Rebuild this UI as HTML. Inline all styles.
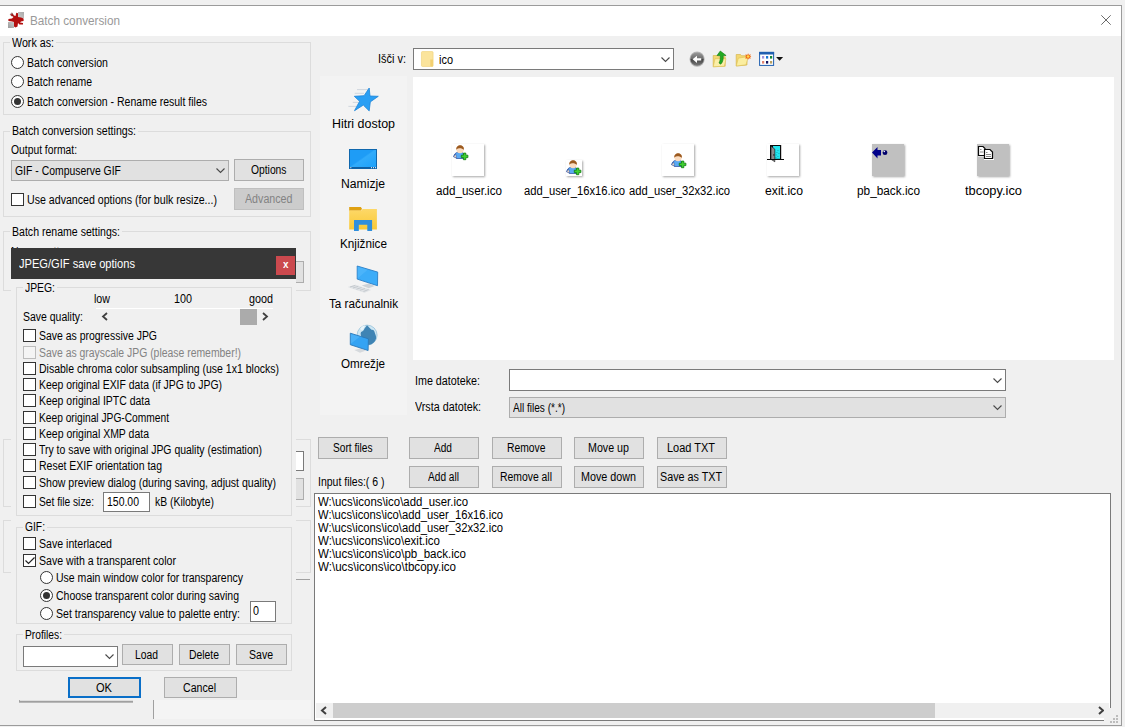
<!DOCTYPE html>
<html lang="sl">
<head>
<meta charset="utf-8">
<title>Batch conversion</title>
<style>
html,body{margin:0;padding:0;}
body{width:1125px;height:727px;overflow:hidden;background:#f0f0f0;font-family:"Liberation Sans","DejaVu Sans",sans-serif;}
#win{position:absolute;left:0;top:0;width:1125px;height:727px;overflow:hidden;background:#f0f0f0;}
#win div,#win i,#win button{position:absolute;box-sizing:border-box;display:block;margin:0;padding:0;}
#win button{font:inherit;color:inherit;text-align:left;overflow:visible;}
#win svg{position:absolute;overflow:visible;}
.t{position:absolute;white-space:pre;transform-origin:0 50%;display:block;}
.grp{border:1px solid #dcdcdc;}
.btn{background:#e1e1e1;border:1px solid #adadad;}
.btn.dis{background:#cccccc;border-color:#bfbfbf;}
.btn.def{border:2px solid #0a6fc8;}
.cb{background:#fff;border:1px solid #333;width:13px;height:13px;}
.cb.dis{border-color:#bcbcbc;background:#f4f4f4;}
.rb{background:#fff;border:1px solid #333;border-radius:50%;width:13px;height:13px;}
.rb.on::after{content:"";position:absolute;left:2px;top:2px;width:7px;height:7px;border-radius:50%;background:#333;}
.edit{background:#fff;border:1px solid #7a7a7a;}
.combo{background:#fff;border:1px solid #7a7a7a;}
.combo.lst{background:#e1e1e1;border-color:#adadad;}
.lbl{background:#f0f0f0;}
.thumb{background:#fff;box-shadow:1px 1px 2px rgba(0,0,0,.35);}
.thumb.g{background:#c0c0c0;}
.b{font-weight:bold;}
</style>
</head>
<body>
<div id="win">
<div style="left:0px;top:5px;width:1122px;height:721px;border:1px solid #9b9b9b;border-left:none;background:#f0f0f0;"></div>
<div style="left:0px;top:6px;width:1121px;height:30px;background:#fff;"></div>
<svg style="left:8px;top:12px" width="16" height="16" viewBox="0 0 16 16"><defs><linearGradient id="ig" x1="0" y1="1" x2="1" y2="0"><stop offset="0" stop-color="#9a9a9a"/><stop offset=".5" stop-color="#d8d8d8"/><stop offset="1" stop-color="#a8a8a8"/></linearGradient></defs><path d="M10 0h6v6h-6zM0 10h6v6H0z" fill="url(#ig)"/><path d="M8.300.8l1.700.5V5l3 .5 2.600 1v2.400L13 9.500l-1 1 3 .5v1.500h-3.500L10 11l-.5 3.500-2 1-1.500-1V10l-2-.5L.4 9V7L4 6.500 5.500 5 2.500 3 4 1.500 6 3.500 7.500 4z" fill="#b20e0e"/><path d="M2.300 2.600l1.500-1.800 1.300 1.700-1.400 1.300z" fill="none" stroke="#5a1414" stroke-width=".6"/></svg>
<span class="t" style="left:29.5px;top:14px;font-size:12px;line-height:15px;color:#999;transform:scaleX(0.9776);">Batch conversion</span>
<svg style="left:1101px;top:15px" width="10" height="10" viewBox="0 0 10 10"><path d="M0.300 0.300l9.400 9.400M9.700 0.300l-9.400 9.400" stroke="#6a6a6a" stroke-width="1" fill="none"/></svg>
<div class="grp" style="left:3px;top:42px;width:308px;height:73px;"></div>
<div class="lbl" style="left:10px;top:36px;width:46px;height:13px;"></div>
<span class="t" style="left:12.0px;top:36px;font-size:12px;line-height:15px;transform:scaleX(0.8912);">Work as:</span>
<label>
<i class="rb" style="left:11px;top:56px;width:13px;height:13px;"></i>
<span class="t" style="left:27.0px;top:56px;font-size:12px;line-height:15px;transform:scaleX(0.8798);">Batch conversion</span>
</label>
<label>
<i class="rb" style="left:11px;top:75px;width:13px;height:13px;"></i>
<span class="t" style="left:27.0px;top:75px;font-size:12px;line-height:15px;transform:scaleX(0.8699);">Batch rename</span>
</label>
<label>
<i class="rb on" style="left:11px;top:95px;width:13px;height:13px;"></i>
<span class="t" style="left:27.0px;top:95px;font-size:12px;line-height:15px;transform:scaleX(0.8762);">Batch conversion - Rename result files</span>
</label>
<div class="grp" style="left:3px;top:131px;width:308px;height:86px;"></div>
<div class="lbl" style="left:10px;top:125px;width:128px;height:13px;"></div>
<span class="t" style="left:12.0px;top:124px;font-size:12px;line-height:15px;transform:scaleX(0.8852);">Batch conversion settings:</span>
<span class="t" style="left:11.0px;top:143px;font-size:12px;line-height:15px;transform:scaleX(0.8605);">Output format:</span>
<div class="combo lst" style="left:11px;top:160px;width:218px;height:21px;"></div>
<span class="t" style="left:14.5px;top:164px;font-size:12px;line-height:15px;transform:scaleX(0.8686);">GIF - Compuserve GIF</span>
<svg style="left:215px;top:168px;margin-left:1px" width="9" height="6" viewBox="0 0 9 6"><path d="M0.5 0.5l4 4 4-4" stroke="#4a4a4a" stroke-width="1.1" fill="none"/></svg>
<button class="btn" style="left:234px;top:159px;width:70px;height:22px;"><span class="t" style="left:15.6px;top:3px;font-size:12px;line-height:15px;transform:scaleX(0.8583);">Options</span></button>
<label>
<i class="cb" style="left:11px;top:193px;width:13px;height:13px;"></i>
<span class="t" style="left:27.0px;top:193px;font-size:12px;line-height:15px;transform:scaleX(0.8846);">Use advanced options (for bulk resize...)</span>
</label>
<button class="btn dis" style="left:234px;top:188px;width:70px;height:22px;"><span class="t" style="left:9.6px;top:3px;font-size:12px;line-height:15px;color:#838383;transform:scaleX(0.8899);">Advanced</span></button>
<div class="grp" style="left:3px;top:231px;width:308px;height:60px;"></div>
<div class="lbl" style="left:10px;top:225px;width:112px;height:13px;"></div>
<span class="t" style="left:12.0px;top:225px;font-size:12px;line-height:15px;transform:scaleX(0.8799);">Batch rename settings:</span>
<div style="left:11px;top:238px;width:90px;height:10px;overflow:hidden"><span class="t" style="left:0;top:6.5px;font-size:12px;line-height:15px;transform:scaleX(.875)">Name pattern:</span></div>
<div class="btn" style="left:290px;top:261px;width:14px;height:22px;"></div>
<div class="grp" style="left:3px;top:439px;width:308px;height:68px;"></div>
<div class="grp" style="left:3px;top:520px;width:308px;height:53px;"></div>
<div class="edit" style="left:290px;top:451px;width:14px;height:20px;"></div>
<div class="btn" style="left:290px;top:478px;width:14px;height:22px;"></div>
<div style="left:296px;top:579px;width:14px;height:1px;background:#a0a0a0;"></div>
<div style="left:19px;top:700px;width:114px;height:1px;background:#dedede;"></div>
<div style="left:19px;top:699px;width:1px;height:3px;background:#a8a8a8;"></div>
<div style="left:19px;top:701px;width:114px;height:1px;background:#a0a0a0;"></div>
<div style="left:19px;top:702px;width:114px;height:1px;background:#b8b8b8;"></div>
<div style="left:153px;top:700px;width:1px;height:19px;background:#a0a0a0;"></div>
<div style="left:154px;top:700px;width:157px;height:19px;background:#f4f4f4;"></div>
<div style="left:11px;top:248px;width:285px;height:452px;background:#f0f0f0;"></div>
<div style="left:11px;top:248px;width:285px;height:31px;background:#373737;"></div>
<span class="t" style="left:19.0px;top:256px;font-size:13px;line-height:16px;color:#fff;transform:scaleX(0.8539);">JPEG/GIF save options</span>
<div style="left:276px;top:256px;width:19px;height:19px;background:#cb494e;"></div>
<span class="t b" style="left:282.5px;top:258px;font-size:10px;line-height:13px;color:#fff;transform:scaleX(0.9888);">x</span>
<div class="grp" style="left:16px;top:287px;width:276px;height:229px;"></div>
<div class="lbl" style="left:23px;top:281px;width:34px;height:13px;"></div>
<span class="t" style="left:25.0px;top:281px;font-size:12px;line-height:15px;transform:scaleX(0.8649);">JPEG:</span>
<span class="t" style="left:94.0px;top:292px;font-size:12px;line-height:15px;transform:scaleX(0.8881);">low</span>
<span class="t" style="left:174.0px;top:292px;font-size:12px;line-height:15px;transform:scaleX(0.8986);">100</span>
<span class="t" style="left:249.0px;top:292px;font-size:12px;line-height:15px;transform:scaleX(0.8988);">good</span>
<span class="t" style="left:23.0px;top:310px;font-size:12px;line-height:15px;transform:scaleX(0.8731);">Save quality:</span>
<div style="left:96px;top:308px;width:177px;height:1px;background:#fff;"></div>
<div style="left:240px;top:309px;width:17px;height:16px;background:#ababab;"></div>
<svg style="left:101px;top:312px" width="8" height="9" viewBox="0 0 8 9"><path d="M6 1L2 4.500 6 8" stroke="#404040" stroke-width="1.800" fill="none"/></svg>
<svg style="left:261px;top:312px" width="8" height="9" viewBox="0 0 8 9"><path d="M2 1l4 3.500L2 8" stroke="#404040" stroke-width="1.800" fill="none"/></svg>
<label>
<i class="cb" style="left:23px;top:329px;width:13px;height:13px;"></i>
<span class="t" style="left:39.0px;top:329px;font-size:12px;line-height:15px;transform:scaleX(0.8715);">Save as progressive JPG</span>
</label>
<label>
<i class="cb dis" style="left:23px;top:346px;width:13px;height:13px;"></i>
<span class="t" style="left:39.0px;top:346px;font-size:12px;line-height:15px;color:#838383;transform:scaleX(0.8678);">Save as grayscale JPG (please remember!)</span>
</label>
<label>
<i class="cb" style="left:23px;top:362px;width:13px;height:13px;"></i>
<span class="t" style="left:39.0px;top:362px;font-size:12px;line-height:15px;transform:scaleX(0.8755);">Disable chroma color subsampling (use 1x1 blocks)</span>
</label>
<label>
<i class="cb" style="left:23px;top:378px;width:13px;height:13px;"></i>
<span class="t" style="left:39.0px;top:378px;font-size:12px;line-height:15px;transform:scaleX(0.8683);">Keep original EXIF data (if JPG to JPG)</span>
</label>
<label>
<i class="cb" style="left:23px;top:394px;width:13px;height:13px;"></i>
<span class="t" style="left:39.0px;top:394px;font-size:12px;line-height:15px;transform:scaleX(0.8712);">Keep original IPTC data</span>
</label>
<label>
<i class="cb" style="left:23px;top:411px;width:13px;height:13px;"></i>
<span class="t" style="left:39.0px;top:411px;font-size:12px;line-height:15px;transform:scaleX(0.8512);">Keep original JPG-Comment</span>
</label>
<label>
<i class="cb" style="left:23px;top:427px;width:13px;height:13px;"></i>
<span class="t" style="left:39.0px;top:427px;font-size:12px;line-height:15px;transform:scaleX(0.8740);">Keep original XMP data</span>
</label>
<label>
<i class="cb" style="left:23px;top:443px;width:13px;height:13px;"></i>
<span class="t" style="left:39.0px;top:443px;font-size:12px;line-height:15px;transform:scaleX(0.8700);">Try to save with original JPG quality (estimation)</span>
</label>
<label>
<i class="cb" style="left:23px;top:459px;width:13px;height:13px;"></i>
<span class="t" style="left:39.0px;top:459px;font-size:12px;line-height:15px;transform:scaleX(0.8739);">Reset EXIF orientation tag</span>
</label>
<label>
<i class="cb" style="left:23px;top:476px;width:13px;height:13px;"></i>
<span class="t" style="left:39.0px;top:476px;font-size:12px;line-height:15px;transform:scaleX(0.8795);">Show preview dialog (during saving, adjust quality)</span>
</label>
<label>
<i class="cb" style="left:23px;top:495px;width:13px;height:13px;"></i>
<span class="t" style="left:39.0px;top:495px;font-size:12px;line-height:15px;transform:scaleX(0.8500);">Set file size:</span>
</label>
<div class="edit" style="left:103px;top:492px;width:47px;height:20px;"></div>
<span class="t" style="left:107.0px;top:495px;font-size:12px;line-height:15px;transform:scaleX(0.8719);">150.00</span>
<span class="t" style="left:154.5px;top:495px;font-size:12px;line-height:15px;transform:scaleX(0.8672);">kB (Kilobyte)</span>
<div class="grp" style="left:16px;top:527px;width:276px;height:97px;"></div>
<div class="lbl" style="left:23px;top:521px;width:24px;height:13px;"></div>
<span class="t" style="left:25.0px;top:520px;font-size:12px;line-height:15px;transform:scaleX(0.8568);">GIF:</span>
<label>
<i class="cb" style="left:23px;top:537px;width:13px;height:13px;"></i>
<span class="t" style="left:39.0px;top:537px;font-size:12px;line-height:15px;transform:scaleX(0.8825);">Save interlaced</span>
</label>
<label>
<i class="cb" style="left:23px;top:554px;width:13px;height:13px;"></i>
<svg style="left:25px;top:557px" width="10" height="8" viewBox="0 0 10 8"><path d="M0.5 3.5l3 3 6-6" stroke="#222" stroke-width="1.2" fill="none"/></svg>
<span class="t" style="left:39.0px;top:554px;font-size:12px;line-height:15px;transform:scaleX(0.8815);">Save with a transparent color</span>
</label>
<label>
<i class="rb" style="left:40px;top:571px;width:13px;height:13px;"></i>
<span class="t" style="left:56.0px;top:571px;font-size:12px;line-height:15px;transform:scaleX(0.8762);">Use main window color for transparency</span>
</label>
<label>
<i class="rb on" style="left:40px;top:589px;width:13px;height:13px;"></i>
<span class="t" style="left:56.0px;top:589px;font-size:12px;line-height:15px;transform:scaleX(0.8736);">Choose transparent color during saving</span>
</label>
<label>
<i class="rb" style="left:40px;top:607px;width:13px;height:13px;"></i>
<span class="t" style="left:56.0px;top:607px;font-size:12px;line-height:15px;transform:scaleX(0.8812);">Set transparency value to palette entry:</span>
</label>
<div class="edit" style="left:250px;top:601px;width:26px;height:21px;"></div>
<span class="t" style="left:253.0px;top:604px;font-size:12px;line-height:15px;transform:scaleX(0.8972);">0</span>
<div class="grp" style="left:16px;top:634px;width:276px;height:37px;"></div>
<div class="lbl" style="left:23px;top:628px;width:41px;height:13px;"></div>
<span class="t" style="left:25.0px;top:628px;font-size:12px;line-height:15px;transform:scaleX(0.8533);">Profiles:</span>
<div class="combo" style="left:23px;top:646px;width:95px;height:21px;"></div>
<svg style="left:104px;top:654px;margin-left:1px" width="9" height="6" viewBox="0 0 9 6"><path d="M0.5 0.5l4 4 4-4" stroke="#4a4a4a" stroke-width="1.1" fill="none"/></svg>
<button class="btn" style="left:122px;top:644px;width:51px;height:21px;"><span class="t" style="left:12.3px;top:3px;font-size:12px;line-height:15px;transform:scaleX(0.8613);">Load</span></button>
<button class="btn" style="left:179px;top:644px;width:51px;height:21px;"><span class="t" style="left:8.8px;top:3px;font-size:12px;line-height:15px;transform:scaleX(0.8649);">Delete</span></button>
<button class="btn" style="left:236px;top:644px;width:51px;height:21px;"><span class="t" style="left:11.8px;top:3px;font-size:12px;line-height:15px;transform:scaleX(0.8772);">Save</span></button>
<button class="btn def" style="left:68px;top:677px;width:73px;height:21px;"><span class="t" style="left:25.8px;top:2px;font-size:12px;line-height:15px;transform:scaleX(0.9225);">OK</span></button>
<button class="btn" style="left:164px;top:677px;width:73px;height:21px;"><span class="t" style="left:18.3px;top:3px;font-size:12px;line-height:15px;transform:scaleX(0.8833);">Cancel</span></button>
<span class="t" style="left:378.0px;top:52px;font-size:12px;line-height:15px;transform:scaleX(0.9129);">Išči v:</span>
<div class="combo" style="left:413px;top:48px;width:261px;height:22px;"></div>
<svg style="left:421px;top:51px" width="13" height="16" viewBox="0 0 14 17"><path d="M.5 1.500q0-1 1-1h10.500q1 0 1 1V15.500q0 1-1 1H1.500q-1 0-1-1z" fill="#fbe49c" stroke="#efd27a" stroke-width=".7"/>
<path d="M10 9h3v7.500h-2q-1 0-1-1z" fill="#f3d071"/></svg>
<span class="t" style="left:438.5px;top:53px;font-size:12px;line-height:15px;transform:scaleX(0.9124);">ico</span>
<svg style="left:660px;top:57px;margin-left:1px" width="9" height="6" viewBox="0 0 9 6"><path d="M0.5 0.5l4 4 4-4" stroke="#4a4a4a" stroke-width="1.1" fill="none"/></svg>
<svg style="left:684px;top:41px" width="60" height="37" viewBox="0 0 60 37"><defs><linearGradient id="bg1" x1="0" y1="0" x2="0" y2="1"><stop offset="0" stop-color="#9a9a9a"/><stop offset=".5" stop-color="#6a6a6a"/><stop offset=".52" stop-color="#454545"/><stop offset="1" stop-color="#7a7a7a"/></linearGradient></defs>
<circle cx="13.100" cy="18.100" r="7.600" fill="#b4b4b4"/><circle cx="13.100" cy="18.100" r="6.700" fill="url(#bg1)"/>
<path d="M8.600 18.300l4.400-3.600v2.500h4.200v2.200H13v2.500z" fill="#fff"/></svg>
<svg style="left:684px;top:41px" width="60" height="37" viewBox="0 0 60 37"><path d="M29.200 14.500h4.500l1 1.200h6.500v9.500l-12 .6z" fill="#f3d772" stroke="#d2b040" stroke-width=".6"/>
<path d="M29.300 25.700l1.700-8h11l-1.700 7.500z" fill="#fbeea8" stroke="#d9bb4c" stroke-width=".5"/>
<path d="M36.300 10l5.800 4.500h-2.900c.3 3.500-.3 6.500-2.400 8.700l-1.800-1.200c1.300-2.300 1.500-4.800 1.200-7.500H33z" fill="#22aa22" stroke="#0d7a0d" stroke-width=".6" stroke-linejoin="round"/></svg>
<svg style="left:730px;top:41px" width="60" height="37" viewBox="0 0 60 37"><path d="M6.200 13.500h4.300l1 1.200h5.500v9.300l-10.800 1z" fill="#f3d772" stroke="#d2b040" stroke-width=".6"/>
<path d="M6.300 25l2-7.800 10-1.700-2.300 8.300z" fill="#fbeea0" stroke="#d9bb4c" stroke-width=".5"/>
<g transform="translate(18.100 15.500)"><path d="M0-3.200L.8-1.400 2.700-2.300 2-.4 3.200 0 2 .9 2.700 2.300 .8 1.700 0 3.200-.8 1.700-2.700 2.300-2-.9-3.200 0-2-.4-2.700-2.300-.8-1.400z" fill="#ee6a14"/><circle r="1.300" fill="#ffd64a"/></g></svg>
<svg style="left:730px;top:41px" width="60" height="37" viewBox="0 0 60 37"><rect x="29.600" y="11.400" width="14" height="13" fill="#fff" stroke="#1f5fb0" stroke-width="1"/>
<rect x="29.100" y="10.900" width="15" height="2.600" fill="#1f5fb0"/>
<rect x="32" y="15" width="2.200" height="2.600" fill="#a394dc"/><rect x="36" y="15" width="2.200" height="2.600" fill="#1a78d2"/><rect x="40" y="15" width="2.200" height="2.600" fill="#12863a"/>
<rect x="32" y="20" width="2.200" height="2.600" fill="#e28472"/><rect x="36" y="20" width="2.200" height="2.600" fill="#12125e"/><rect x="40" y="20" width="2.200" height="2.600" fill="#b9a264"/>
<path d="M46.100 16h7l-3.500 3.800z" fill="#111"/></svg>
<div style="left:320px;top:76px;width:87px;height:339px;background:#f3f3f3;"></div>
<svg style="left:334px;top:80px" width="60" height="37" viewBox="0 0 60 37"><g stroke="#c3ccd6" stroke-width=".9" opacity=".8"><path d="M23 9.600H34M20.800 13.300H30M18.800 22.400H24.500M14.400 26.400H22.500"/></g>
<path d="M35.200 8L36 16 44.300 16.300 36.300 21.900 35.200 30.900 29.300 25.100 20.500 30.700 25.600 21.300 20.300 16.300 30.100 15.700z" fill="#2a9ff4" stroke="#1c84d8" stroke-width=".8" stroke-linejoin="round"/></svg>
<span class="t" style="left:331.5px;top:116px;font-size:12px;line-height:16px;transform:scaleX(1.0378);">Hitri dostop</span>
<svg style="left:334px;top:140px" width="60" height="37" viewBox="0 0 60 37"><defs><linearGradient id="dg" x1="0" y1="0" x2="1" y2="1"><stop offset="0" stop-color="#1e9cf6"/><stop offset=".45" stop-color="#1e9cf6"/><stop offset=".5" stop-color="#31abfb"/><stop offset="1" stop-color="#1aa0fa"/></linearGradient></defs>
<rect x="15.500" y="9.500" width="27" height="19" fill="url(#dg)" stroke="#0f67ad"/>
<rect x="16" y="27" width="26" height="1.500" fill="#0f5fa3"/>
<rect x="16.300" y="27.200" width="1" height="1" fill="#fff"/><rect x="37" y="27.200" width="1" height="1" fill="#fff"/><rect x="39" y="27.200" width="1" height="1" fill="#fff"/><rect x="41" y="27.200" width="1" height="1" fill="#fff"/></svg>
<span class="t" style="left:341.0px;top:176px;font-size:12px;line-height:16px;transform:scaleX(1.0151);">Namizje</span>
<svg style="left:334px;top:200px" width="60" height="37" viewBox="0 0 60 37"><path d="M15.200 7h11.600l1.200 1.700-1.200 2H15.200z" fill="#dfa011"/>
<defs><linearGradient id="lg" x1="0" y1="0" x2="0" y2="1"><stop offset="0" stop-color="#fdd868"/><stop offset="1" stop-color="#f9c936"/></linearGradient></defs>
<path d="M15.200 10.500h12l1.500-1.500h14.200v20.600H15.200z" fill="url(#lg)"/>
<path d="M20 20.300q0-.3.300-.3h17.500q.300 0 .300.300v10.600h-4.800v-6.100h-8.500v6.100H20z" fill="#2f8fdc"/></svg>
<span class="t" style="left:339.5px;top:236px;font-size:12px;line-height:16px;transform:scaleX(0.9785);">Knjižnice</span>
<svg style="left:334px;top:258px" width="60" height="37" viewBox="0 0 60 37"><path d="M27.700 27.500l7-2 6 2.500-6 2.200z" fill="#cdd2d7"/>
<path d="M13.600 29.100l7.700-2.400 16 5.300-6.900 2.700z" fill="#dfe2e5"/>
<path d="M16 29l5.300-1.600M19 30l5.300-1.700M22.500 31.200l5-1.700M26 32.300l5-1.800M29.500 33.500l5-2" stroke="#b9bec4" stroke-width=".7"/>
<path d="M23.200 8l20.500 6.100-.2 13.600-20.300-6.600z" fill="#3cacf8" stroke="#2b7fc6" stroke-width=".9" stroke-linejoin="round"/>
<path d="M23.700 8.700l10 3-10 8.500z" fill="#55b9fb" opacity=".6"/></svg>
<span class="t" style="left:328.5px;top:296px;font-size:12px;line-height:16px;transform:scaleX(0.9757);">Ta računalnik</span>
<svg style="left:334px;top:318px" width="60" height="37" viewBox="0 0 60 37"><circle cx="33.100" cy="17.100" r="10" fill="#cfe7f3" stroke="#7fb3d1" stroke-width=".6"/>
<path d="M33 7.300c2 1.500 3 3.500 4.500 4.500 1.500-.5 2.500.5 3 2 .5 2.500 2 4 1.500 7-.8 3-3.500 5.500-7 6.300-3-1-3.500-4-5.500-6-2.500-2-3.500-4.500-2.500-7 1.500-.5 3-1.500 3.500-3.500z" fill="#3f84b4"/>
<path d="M26 11c1-2 3-3.500 5-3.800-1 2-1 3.800-3 5z" fill="#e9f5fb"/>
<path d="M20.300 32l6-1.500 5.700 2-6 2.200z" fill="#d5d9dd"/>
<path d="M16.300 15.200l18.100 5.600-.3 11.700-17.800-5.800z" fill="#34a3f3" stroke="#2b78b8" stroke-width=".9" stroke-linejoin="round"/>
<path d="M16.800 15.900l9 2.800-9 7z" fill="#5bbcfb" opacity=".55"/></svg>
<span class="t" style="left:341.0px;top:356px;font-size:12px;line-height:16px;transform:scaleX(0.9704);">Omrežje</span>
<div style="left:413px;top:77px;width:701px;height:283px;background:#fff;"></div>
<div class="thumb" style="left:452px;top:144px;width:32px;height:32px;"></div>
<div class="thumb" style="left:662px;top:144px;width:32px;height:32px;"></div>
<div class="thumb" style="left:767px;top:144px;width:32px;height:32px;"></div>
<div class="thumb g" style="left:872px;top:144px;width:32px;height:32px;"></div>
<div class="thumb g" style="left:977px;top:144px;width:32px;height:32px;"></div>
<svg style="left:453px;top:145px" width="16" height="16" viewBox="0 0 16 16"><path d="M.6 11.800C1 9.500 2.500 7.600 4.800 7.300h4.200c1 .4 1.700 1.500 1.700 3.200v3H3.300c-.8-1.600-1.800-1.400-2.700-1.700z" fill="#5aa9f2" stroke="#2a4a9c" stroke-width=".7"/>
<path d="M.8 11.500l1.800-2.500 1 3.800c-1 0-2.200-.4-2.800-1.300z" fill="#fbe0c6" stroke="#2a4a9c" stroke-width=".5"/>
<ellipse cx="7.100" cy="4.300" rx="3.700" ry="3.900" fill="#fbdcc0"/>
<path d="M3.300 4.800C3 1.800 5 .2 7.100.2s4.200 1.600 3.800 4.600C9.500 3.400 7.500 3 6 3.300 4.800 3.500 3.800 4 3.300 4.800z" fill="#9c5a1f"/>
<path d="M10.400 8.100h2.400v2.100h2.100v2.400h-2.100v2.100h-2.400v-2.100H8.300v-2.400h2.100z" fill="#3fd02f" stroke="#0b7a0b" stroke-width=".8"/></svg>
<div class="thumb" style="left:566px;top:160px;width:16px;height:16px;"></div>
<svg style="left:566px;top:160px" width="16" height="16" viewBox="0 0 16 16"><path d="M.6 11.800C1 9.500 2.500 7.600 4.800 7.300h4.200c1 .4 1.700 1.500 1.700 3.200v3H3.300c-.8-1.600-1.800-1.400-2.700-1.700z" fill="#5aa9f2" stroke="#2a4a9c" stroke-width=".7"/>
<path d="M.8 11.500l1.800-2.500 1 3.800c-1 0-2.200-.4-2.800-1.300z" fill="#fbe0c6" stroke="#2a4a9c" stroke-width=".5"/>
<ellipse cx="7.100" cy="4.300" rx="3.700" ry="3.900" fill="#fbdcc0"/>
<path d="M3.300 4.800C3 1.800 5 .2 7.100.2s4.200 1.600 3.800 4.600C9.500 3.400 7.500 3 6 3.300 4.800 3.500 3.800 4 3.300 4.800z" fill="#9c5a1f"/>
<path d="M10.400 8.100h2.400v2.100h2.100v2.400h-2.100v2.100h-2.400v-2.100H8.300v-2.400h2.100z" fill="#3fd02f" stroke="#0b7a0b" stroke-width=".8"/></svg>
<svg style="left:671px;top:153px" width="16" height="16" viewBox="0 0 16 16"><path d="M.6 11.800C1 9.500 2.500 7.600 4.800 7.300h4.200c1 .4 1.700 1.500 1.700 3.200v3H3.300c-.8-1.600-1.800-1.400-2.700-1.700z" fill="#5aa9f2" stroke="#2a4a9c" stroke-width=".7"/>
<path d="M.8 11.500l1.800-2.500 1 3.800c-1 0-2.200-.4-2.800-1.300z" fill="#fbe0c6" stroke="#2a4a9c" stroke-width=".5"/>
<ellipse cx="7.100" cy="4.300" rx="3.700" ry="3.900" fill="#fbdcc0"/>
<path d="M3.300 4.800C3 1.800 5 .2 7.100.2s4.200 1.600 3.800 4.600C9.500 3.400 7.500 3 6 3.300 4.800 3.500 3.800 4 3.300 4.800z" fill="#9c5a1f"/>
<path d="M10.400 8.100h2.400v2.100h2.100v2.400h-2.100v2.100h-2.400v-2.100H8.300v-2.400h2.100z" fill="#3fd02f" stroke="#0b7a0b" stroke-width=".8"/></svg>
<svg style="left:755px;top:138px" width="60" height="37" viewBox="0 0 60 37"><rect x="15" y="7" width="11.200" height="14.400" fill="#0a0a0a"/>
<rect x="18" y="8" width="7" height="12.800" fill="#22e6ef"/>
<g fill="#0e9aa6"><rect x="22.500" y="12" width=".9" height=".9"/><rect x="21.500" y="14" width=".9" height=".9"/><rect x="23.500" y="15" width=".9" height=".9"/><rect x="20.800" y="16.500" width=".9" height=".9"/><rect x="22.500" y="18" width=".9" height=".9"/><rect x="20.500" y="19" width=".9" height=".9"/></g>
<path d="M16 8l3.800 3.200v12.600L16 21.300z" fill="#8a8a8a" stroke="#0a0a0a" stroke-width=".6"/>
<rect x="18.300" y="16.300" width="1" height="1.300" fill="#0a0a0a"/>
<rect x="12" y="21" width="17" height="1" fill="#0a0a0a"/></svg>
<svg style="left:872px;top:146px" width="16" height="13" viewBox="0 0 16 13"><path d="M0 6.500L5.500 1v3H9v5.500H5.500v3z" fill="#00008a"/><circle cx="13" cy="6.700" r="2.400" fill="#00006a"/><circle cx="12.300" cy="5.500" r=".8" fill="#f0f0ff"/></svg>
<svg style="left:977px;top:145px" width="18" height="16" viewBox="0 0 18 16"><path d="M7 13.500h10v1.500H7zM1 10.500h6v1H1z" fill="#fff"/><path d="M1.500 1.500h4.500l2 2v7h-6.500z" fill="#fff" stroke="#0a0a0a" stroke-width="1.200"/><path d="M3 4.500h1.500M3 7h3.500" stroke="#555" stroke-width=".7"/>
<path d="M7.500 4.500h5.500l2.500 2.500v6.500h-8z" fill="#fff" stroke="#0a0a0a" stroke-width="1.200"/><path d="M9 7.500h1.500M9 9.500h5M9 11.500h5" stroke="#555" stroke-width=".7"/></svg>
<span class="t" style="left:436.0px;top:183px;font-size:12px;line-height:16px;transform:scaleX(0.9697);">add_user.ico</span>
<span class="t" style="left:523.5px;top:183px;font-size:12px;line-height:16px;transform:scaleX(0.9344);">add_user_16x16.ico</span>
<span class="t" style="left:628.5px;top:183px;font-size:12px;line-height:16px;transform:scaleX(0.9344);">add_user_32x32.ico</span>
<span class="t" style="left:765.0px;top:183px;font-size:12px;line-height:16px;transform:scaleX(1.0171);">exit.ico</span>
<span class="t" style="left:856.5px;top:183px;font-size:12px;line-height:16px;transform:scaleX(0.9837);">pb_back.ico</span>
<span class="t" style="left:964.5px;top:183px;font-size:12px;line-height:16px;transform:scaleX(1.0726);">tbcopy.ico</span>
<span class="t" style="left:415.0px;top:374px;font-size:12px;line-height:15px;transform:scaleX(0.8939);">Ime datoteke:</span>
<div class="combo" style="left:509px;top:369px;width:497px;height:22px;"></div>
<svg style="left:992px;top:378px;margin-left:1px" width="9" height="6" viewBox="0 0 9 6"><path d="M0.5 0.5l4 4 4-4" stroke="#4a4a4a" stroke-width="1.1" fill="none"/></svg>
<span class="t" style="left:415.0px;top:400px;font-size:12px;line-height:15px;transform:scaleX(0.8968);">Vrsta datotek:</span>
<div class="combo lst" style="left:509px;top:397px;width:497px;height:21px;"></div>
<span class="t" style="left:513.0px;top:401px;font-size:12px;line-height:15px;transform:scaleX(0.8385);">All files (*.*)</span>
<svg style="left:992px;top:405px;margin-left:1px" width="9" height="6" viewBox="0 0 9 6"><path d="M0.5 0.5l4 4 4-4" stroke="#4a4a4a" stroke-width="1.1" fill="none"/></svg>
<button class="btn" style="left:318px;top:437px;width:70px;height:22px;"><span class="t" style="left:13.6px;top:3px;font-size:12px;line-height:15px;transform:scaleX(0.8461);">Sort files</span></button>
<button class="btn" style="left:409px;top:437px;width:70px;height:22px;"><span class="t" style="left:24.3px;top:3px;font-size:12px;line-height:15px;transform:scaleX(0.8427);">Add</span></button>
<button class="btn" style="left:492px;top:437px;width:70px;height:22px;"><span class="t" style="left:14.0px;top:3px;font-size:12px;line-height:15px;transform:scaleX(0.8615);">Remove</span></button>
<button class="btn" style="left:574px;top:437px;width:70px;height:22px;"><span class="t" style="left:12.8px;top:3px;font-size:12px;line-height:15px;transform:scaleX(0.8907);">Move up</span></button>
<button class="btn" style="left:657px;top:437px;width:70px;height:22px;"><span class="t" style="left:9.3px;top:3px;font-size:12px;line-height:15px;transform:scaleX(0.9146);">Load TXT</span></button>
<button class="btn" style="left:409px;top:466px;width:70px;height:22px;"><span class="t" style="left:17.8px;top:3px;font-size:12px;line-height:15px;transform:scaleX(0.8446);">Add all</span></button>
<button class="btn" style="left:492px;top:466px;width:70px;height:22px;"><span class="t" style="left:7.3px;top:3px;font-size:12px;line-height:15px;transform:scaleX(0.8662);">Remove all</span></button>
<button class="btn" style="left:574px;top:466px;width:70px;height:22px;"><span class="t" style="left:5.8px;top:3px;font-size:12px;line-height:15px;transform:scaleX(0.8961);">Move down</span></button>
<button class="btn" style="left:657px;top:466px;width:70px;height:22px;"><span class="t" style="left:2.3px;top:3px;font-size:12px;line-height:15px;transform:scaleX(0.8967);">Save as TXT</span></button>
<span class="t" style="left:317.5px;top:475px;font-size:12px;line-height:15px;transform:scaleX(0.8746);">Input files:( 6 )</span>
<div style="left:314px;top:493px;width:797px;height:228px;background:#fff;border:1px solid #7a7a7a;"></div>
<span class="t" style="left:318.0px;top:495px;font-size:12px;line-height:15px;transform:scaleX(0.9502);">W:\ucs\icons\ico\add_user.ico</span>
<span class="t" style="left:318.0px;top:508px;font-size:12px;line-height:15px;transform:scaleX(0.9349);">W:\ucs\icons\ico\add_user_16x16.ico</span>
<span class="t" style="left:318.0px;top:521px;font-size:12px;line-height:15px;transform:scaleX(0.9349);">W:\ucs\icons\ico\add_user_32x32.ico</span>
<span class="t" style="left:318.0px;top:534px;font-size:12px;line-height:15px;transform:scaleX(0.9594);">W:\ucs\icons\ico\exit.ico</span>
<span class="t" style="left:318.0px;top:547px;font-size:12px;line-height:15px;transform:scaleX(0.9619);">W:\ucs\icons\ico\pb_back.ico</span>
<span class="t" style="left:318.0px;top:560px;font-size:12px;line-height:15px;transform:scaleX(0.9654);">W:\ucs\icons\ico\tbcopy.ico</span>
<div style="left:316px;top:703px;width:793px;height:15px;background:#f0f0f0;"></div>
<div style="left:333px;top:703px;width:602px;height:15px;background:#cdcdcd;"></div>
<svg style="left:320px;top:706px" width="8" height="9" viewBox="0 0 8 9"><path d="M6 1L2 4.500 6 8" stroke="#404040" stroke-width="2" fill="none"/></svg>
<svg style="left:1097px;top:706px" width="8" height="9" viewBox="0 0 8 9"><path d="M2 1l4 3.500L2 8" stroke="#404040" stroke-width="2" fill="none"/></svg>
<div style="left:1104px;top:708px;width:17px;height:17px;background:#f0f0f0;"></div>
<svg style="left:1109px;top:714px" width="10" height="10" viewBox="0 0 10 10"><g fill="#bcbcbc"><rect x="7" y="1" width="2" height="2"/><rect x="4" y="4" width="2" height="2"/><rect x="7" y="4" width="2" height="2"/><rect x="1" y="7" width="2" height="2"/><rect x="4" y="7" width="2" height="2"/><rect x="7" y="7" width="2" height="2"/></g></svg>
</div>
</body>
</html>
